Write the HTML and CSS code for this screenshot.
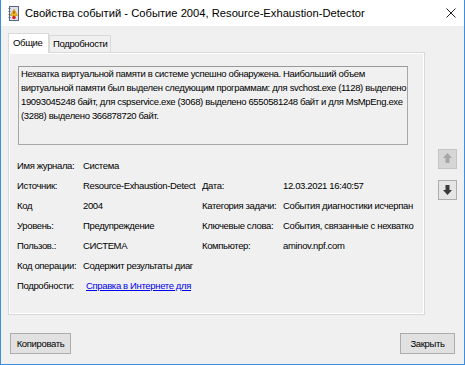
FILE: index.html
```html
<!DOCTYPE html>
<html lang="ru">
<head>
<meta charset="utf-8">
<title>Свойства событий</title>
<link rel="stylesheet" href="styles.css">
</head>
<body>
<div class="window">
  <div class="titlebar">
    <svg class="appicon" width="11" height="15" viewBox="0 0 11 15">
      <rect x="1.5" y="0.5" width="9" height="14" fill="#dfe3ee" stroke="#5b6483"/>
      <rect x="0.5" y="2" width="2" height="1" fill="#5b6483"/>
      <rect x="0.5" y="5" width="2" height="1" fill="#5b6483"/>
      <rect x="0.5" y="8" width="2" height="1" fill="#5b6483"/>
      <rect x="0.5" y="11" width="2" height="1" fill="#5b6483"/>
      <path d="M6 3 L9.5 9.5 L2.5 9.5 Z" fill="#f2c21b" stroke="#c98a00" stroke-width="0.6"/>
      <circle cx="6" cy="11.5" r="1.8" fill="#d9261c"/>
      <rect x="5.5" y="5" width="1" height="3" fill="#8a2a00"/>
    </svg>
    <span class="title">Свойства событий - Событие 2004, Resource-Exhaustion-Detector</span>
    <svg class="close" width="10" height="10" viewBox="0 0 10 10">
      <path d="M0.5 0.5 L9.5 9.5 M9.5 0.5 L0.5 9.5" stroke="#222" stroke-width="1"/>
    </svg>
  </div>
  <div class="body">
    <div class="main">
      <div class="tabsarea">
        <div class="tabs">
          <div class="tab active">Общие</div>
          <div class="tab">Подробности</div>
        </div>
        <div class="panel">
          <div class="msg">Нехватка виртуальной памяти в системе успешно обнаружена. Наибольший объем<br>виртуальной памяти был выделен следующим программам: для svchost.exe (1128) выделено<br>19093045248 байт, для cspservice.exe (3068) выделено 6550581248 байт и для MsMpEng.exe<br>(3288) выделено 366878720 байт.</div>
          <div class="fields">
            <div class="lbl">Имя журнала:</div><div class="val">Система</div><div class="lbl2"></div><div class="val2"></div>
            <div class="lbl">Источник:</div><div class="val">Resource-Exhaustion-Detect</div><div class="lbl2">Дата:</div><div class="val2">12.03.2021 16:40:57</div>
            <div class="lbl">Код</div><div class="val">2004</div><div class="lbl2">Категория задачи:</div><div class="val2">События диагностики исчерпан</div>
            <div class="lbl">Уровень:</div><div class="val">Предупреждение</div><div class="lbl2">Ключевые слова:</div><div class="val2">События, связанные с нехватко</div>
            <div class="lbl">Пользов.:</div><div class="val">СИСТЕМА</div><div class="lbl2">Компьютер:</div><div class="val2">aminov.npf.com</div>
            <div class="lbl">Код операции:</div><div class="val">Содержит результаты диаг</div><div class="lbl2"></div><div class="val2"></div>
            <div class="lbl">Подробности:</div><div class="val"><span class="link">Справка в Интернете для</span></div><div class="lbl2"></div><div class="val2"></div>
          </div>
        </div>
      </div>
      <div class="nav">
        <div class="navbtn disabled">
          <svg width="19" height="20" viewBox="0 0 19 20"><path d="M9.5 4 L14 9 L11.5 9 L11.5 14 L7.5 14 L7.5 9 L5 9 Z" fill="#a6a6a6"/></svg>
        </div>
        <div class="navbtn">
          <svg width="19" height="20" viewBox="0 0 19 20"><path d="M9.5 15 L14 10 L11.5 10 L11.5 5 L7.5 5 L7.5 10 L5 10 Z" fill="#3a3a3a"/></svg>
        </div>
      </div>
    </div>
    <div class="footer">
      <div class="btn">Копировать</div>
      <div class="btn close-btn">Закрыть</div>
    </div>
  </div>
</div>
</body>
</html>
```

FILE: styles.css
```css
* { box-sizing: border-box; }
html, body { margin: 0; padding: 0; background: #f0f0f0; }
.window {
  width: 465px;
  height: 365px;
  border: 1px solid #3d8ee0;
  border-top: none;
  display: flex;
  flex-direction: column;
  font-family: "Liberation Sans", Arial, sans-serif;
  font-size: 9.5px;
  letter-spacing: -0.35px;
  color: #000;
}
.titlebar {
  height: 26px;
  background: #fff;
  display: flex;
  align-items: center;
  padding-left: 7px;
}
.appicon { display: block; margin-top: 1px; }
.title {
  margin-left: 6px;
  font-size: 11.2px;
  letter-spacing: 0;
  color: #000;
  white-space: nowrap;
}
.close { margin-left: auto; margin-right: 8px; }
.body {
  flex: 1;
  background: #f0f0f0;
  padding-top: 7px;
  display: flex;
  flex-direction: column;
}
.main { display: flex; padding-left: 7px; }
.tabsarea { width: 417px; }
.tabs { display: flex; align-items: flex-end; height: 19px; }
.tab {
  height: 17px;
  border: 1px solid #d9d9d9;
  border-bottom: none;
  background: #f0f0f0;
  padding: 0 3px;
  line-height: 16px;
  white-space: nowrap;
}
.tab.active {
  height: 20px;
  margin-bottom: -1px;
  background: #fff;
  position: relative;
  z-index: 1;
  padding: 1px 4px 0 4px;
  width: 41px;
}
.tab:not(.active) { width: 62px; }
.panel {
  height: 263px;
  border: 1px solid #d9d9d9;
  box-shadow: inset 0 0 0 1px #fff;
  padding: 13px 0 0 9px;
}
.msg {
  width: 390px;
  height: 79px;
  border: 1px solid #a7a7a7;
  border-top-color: #9a9a9a;
  background: #f0f0f0;
  padding: 0 2px;
  line-height: 14px;
  white-space: nowrap;
  overflow: hidden;
}
.fields {
  margin-top: 11px;
  display: grid;
  grid-template-columns: 66px 119px 81px 131px;
  grid-auto-rows: 20px;
  line-height: 20px;
  margin-left: -1px;
}
.fields > div { white-space: nowrap; overflow: hidden; }
.link { color: #0000ee; text-decoration: underline; margin-left: 3px; }
.nav {
  margin-left: 13px;
  margin-top: 116px;
  display: flex;
  flex-direction: column;
  gap: 11px;
}
.navbtn {
  width: 19px;
  height: 20px;
  border: 1px solid #adadad;
  background: #e5e5e5;
  position: relative;
}
.navbtn svg { position: absolute; left: -1px; top: -1px; }
.navbtn.disabled { border-color: #c4c4c4; background: #d6d6d6; }
.footer {
  display: flex;
  justify-content: space-between;
  margin-top: 18px;
  padding: 0 9px;
}
.btn {
  height: 21px;
  width: 61px;
  border: 1px solid #adadad;
  background: #e1e1e1;
  text-align: center;
  line-height: 19px;
}
.close-btn { width: 55px; }
```
